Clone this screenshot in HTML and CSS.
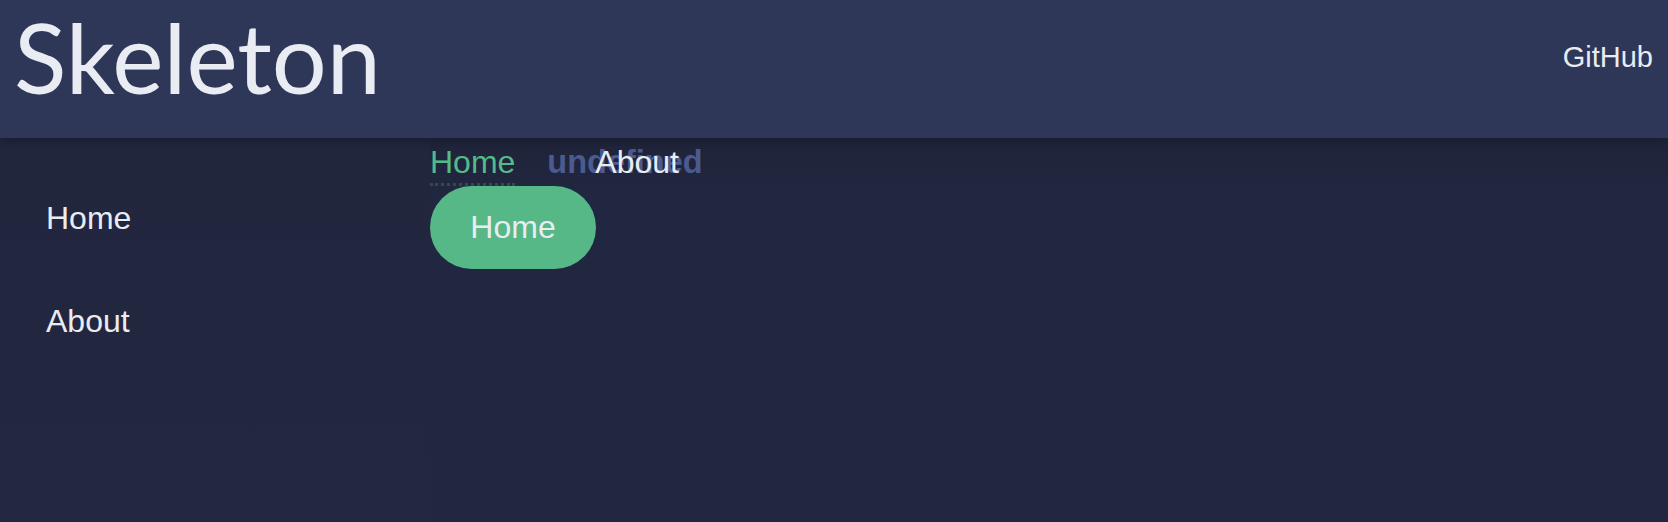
FILE: index.html
```html
<!DOCTYPE html>
<html>
<head>
<meta charset="utf-8">
<link rel="stylesheet" href="styles.css">
</head>
<body>
<header class="topbar">
  <div class="brand">Skeleton</div>
  <a class="github">GitHub</a>
</header>
<div class="layout">
  <nav class="sidebar">
    <a class="side-link">Home</a>
    <a class="side-link">About</a>
  </nav>
  <main class="main">
    <div class="tabs">
      <a class="tab active">Home</a>
      <span class="tab-wrap">
        <span class="ghost">undefined</span>
        <a class="tab over">About</a>
      </span>
    </div>
    <button class="pill">Home</button>
  </main>
</div>
</body>
</html>
```
FILE: styles.css
```css
html, body {
  margin: 0;
  padding: 0;
  height: 100%;
}
body {
  background: #222741;
  color: #e9ecf3;
  font-family: "Liberation Sans", Arial, sans-serif;
  overflow: hidden;
}
.topbar {
  height: 138px;
  background: #2f3758;
  display: flex;
  justify-content: space-between;
  align-items: flex-start;
  position: relative;
  z-index: 2;
  box-shadow: 0 2px 10px rgba(10, 12, 25, 0.35);
}
.brand {
  font-family: Lato, sans-serif;
  font-size: 97px;
  line-height: 1;
  color: #e9ecf3;
  padding-left: 14px;
  padding-top: 8px;
}
.github {
  font-size: 29px;
  color: #e9ecf3;
  padding-right: 15px;
  padding-top: 41px;
}
.layout {
  display: flex;
  height: 384px;
}
.sidebar {
  width: 430px;
  background: linear-gradient(#21263d, #232842);
  display: flex;
  flex-direction: column;
  padding-top: 63px;
  box-sizing: border-box;
}
.side-link {
  font-size: 32px;
  line-height: 34px;
  padding-left: 46px;
  height: 103px;
  color: #e9ecf3;
}
.main {
  flex: 1;
  background: linear-gradient(#1f2439, #222741 60px);
  padding-top: 7px;
}
.tabs {
  display: flex;
  gap: 32px;
  font-size: 32px;
  line-height: 34px;
}
.tab {
  color: #e9ecf3;
}
.tab.active {
  color: #52bb88;
  border-bottom: 3px dotted #2d4c4b;
  height: 38px;
}
.tab-wrap {
  position: relative;
}
.ghost {
  font-weight: bold;
  color: #4b5a8f;
  font-size: 32.5px;
}
.tab.over {
  position: absolute;
  left: 48px;
  top: 0;
}
.pill {
  display: block;
  width: 166px;
  height: 83px;
  border: none;
  border-radius: 42px;
  background: #55b886;
  color: #e9ecf3;
  font-family: "Liberation Sans", Arial, sans-serif;
  font-size: 32px;
  padding: 0;
}
```
